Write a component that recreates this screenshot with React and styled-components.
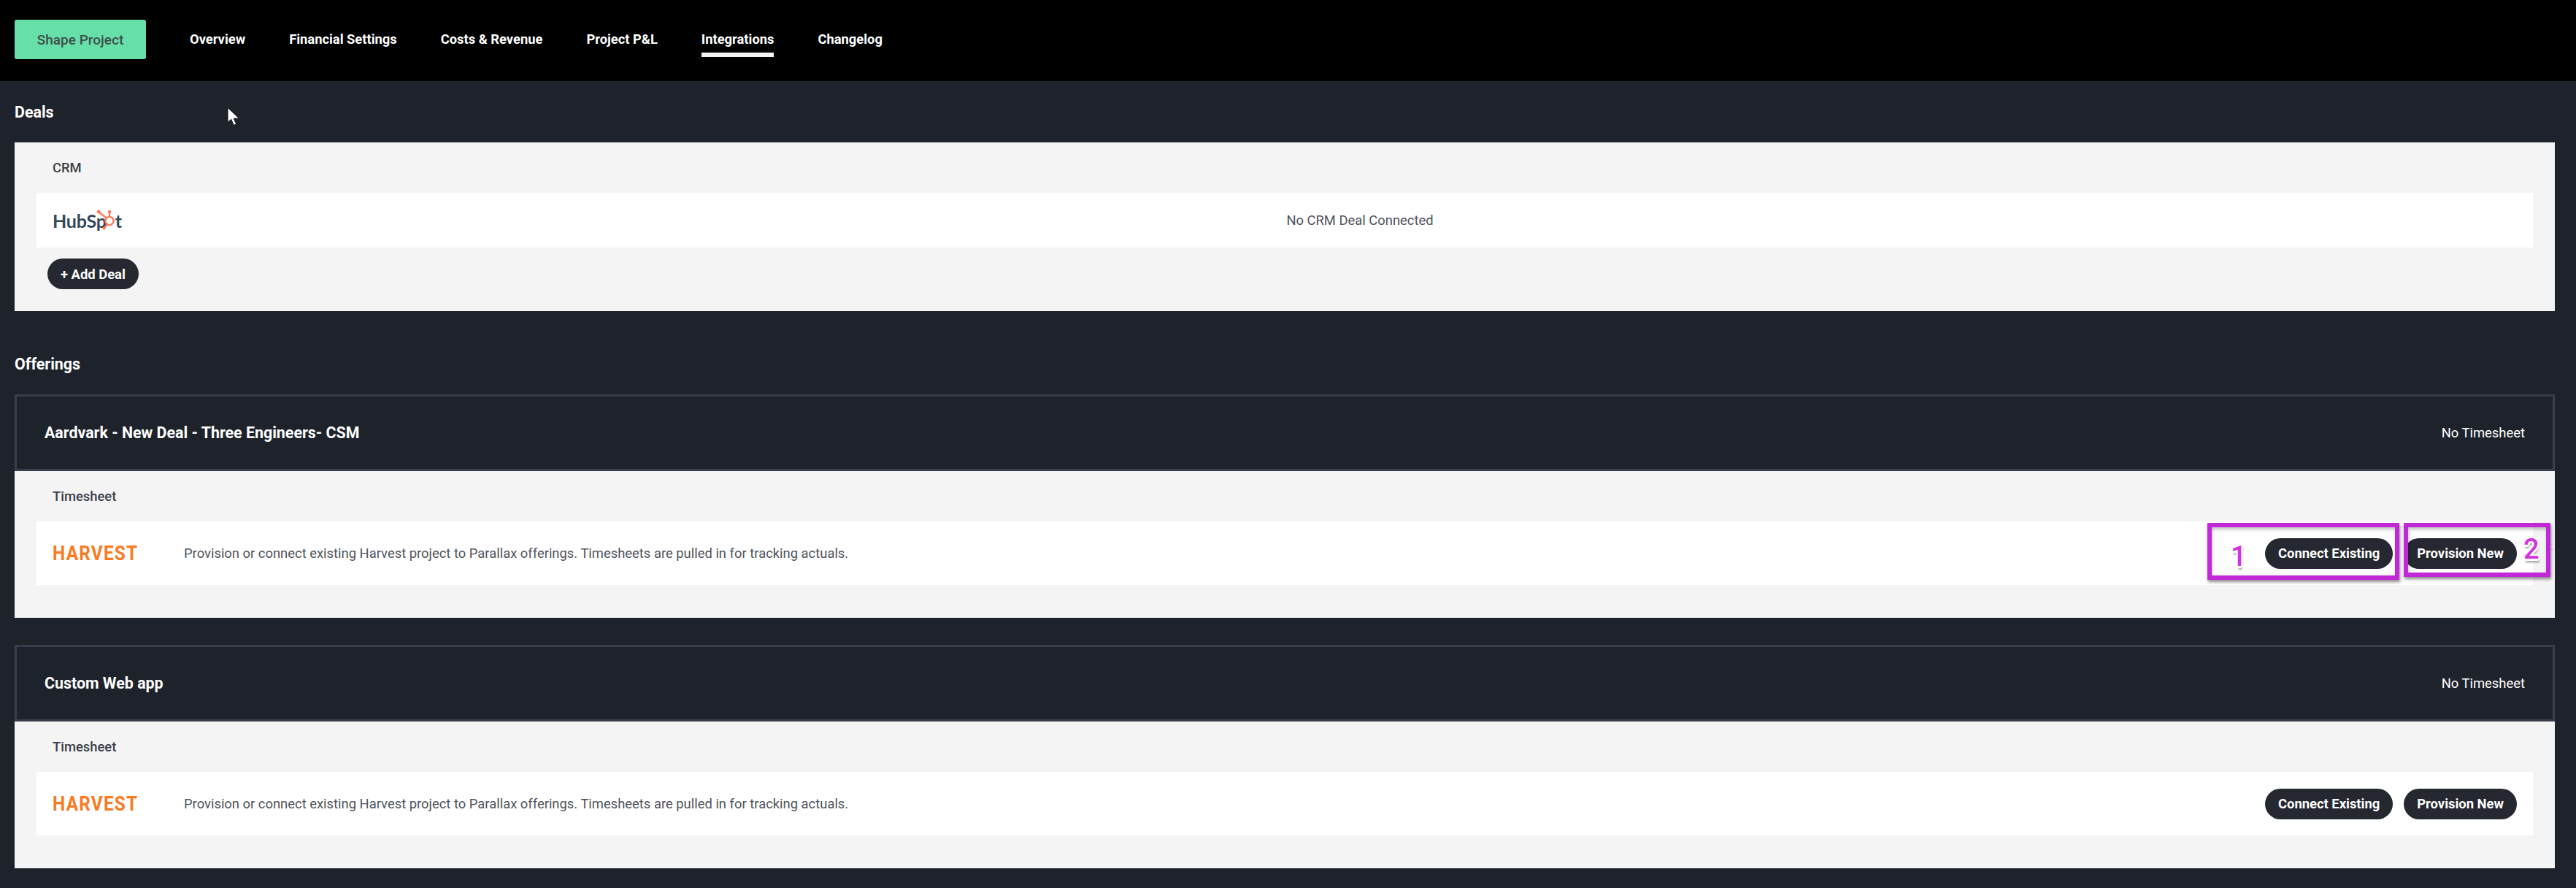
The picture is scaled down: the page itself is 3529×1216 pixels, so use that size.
import React from 'react';
import styled, { createGlobalStyle } from 'styled-components';

const GlobalStyle = createGlobalStyle`
  html, body {
    margin: 0;
    padding: 0;
    background: #1e222b;
    font-family: Roboto, "Liberation Sans", sans-serif;
  }
  * {
    box-sizing: border-box;
  }
`;

const Screen = styled.div`
  position: relative;
  width: 3529px;
  height: 1216px;
  overflow: hidden;
  background: #1e222b;
`;

const TopBar = styled.header`
  height: 111px;
  background: #000;
  display: flex;
  align-items: flex-start;
  padding: 27px 20px 0;
`;

const ShapeButton = styled.div`
  width: 180px;
  height: 54px;
  background: #66dfa9;
  border-radius: 3px;
  color: #3f4f49;
  font-size: 19px;
  font-weight: 500;
  display: flex;
  align-items: center;
  justify-content: center;
`;

const Nav = styled.nav`
  display: flex;
  gap: 60px;
  margin-left: 60px;
`;

const NavLink = styled.div`
  height: 51px;
  padding-top: 15px;
  font-size: 18.35px;
  line-height: 24px;
  font-weight: 700;
  color: #fff;
  border-bottom: 6px solid ${(p) => (p.$active ? '#f3f3f3' : 'transparent')};
`;

const Content = styled.main`
  padding: 0 29px 0 20px;
`;

const SectionTitle = styled.h2`
  margin: 0;
  height: 84px;
  display: flex;
  align-items: center;
  font-size: 21.4px;
  font-weight: 700;
  color: #fff;
`;

const Section = styled.section`
  margin-bottom: 30px;
`;

const Panel = styled.div`
  background: #f4f4f4;
  padding: 0 30px ${(p) => p.$bottom}px;
`;

const PanelLabel = styled.div`
  height: 69px;
  padding-left: 22px;
  display: flex;
  align-items: center;
  font-size: 18.4px;
  font-weight: 500;
  color: #3a3f4a;
`;

const Row = styled.div`
  position: relative;
  height: ${(p) => p.$height}px;
  background: #fff;
  padding: 0 22px;
  display: flex;
  align-items: center;
`;

const LogoCell = styled.div`
  width: 180px;
  flex: none;
`;

const HubSpotMark = styled.div`
  display: flex;
  align-items: center;
  height: 30px;
  color: #33475b;
  font-family: Lato, sans-serif;
  font-size: 25px;
  font-weight: 700;
  letter-spacing: -0.2px;
`;

const Sprocket = styled.svg`
  width: 22px;
  height: 28px;
  margin: -2px -3px 0 -7px;
  flex: none;
  overflow: visible;
`;

const HarvestMark = styled.div`
  color: #fa7a1f;
  font-size: 28px;
  line-height: 30px;
  font-weight: 700;
  letter-spacing: 1.4px;
  width: 116px;
  transform: scaleX(0.87);
  transform-origin: left center;
  white-space: nowrap;
`;

const NoDeal = styled.div`
  flex: 1;
  padding-left: 26px;
  text-align: center;
  font-size: 18.4px;
  color: #50545c;
`;

const Description = styled.div`
  flex: 1;
  font-size: 18.4px;
  color: #50545c;
`;

const PillRow = styled.div`
  display: flex;
  gap: 15px;
`;

const Pill = styled.button`
  height: 42px;
  padding: 0 18px;
  border: 0;
  border-radius: 21px;
  background: #252830;
  color: #fff;
  font-family: inherit;
  font-size: 18.4px;
  font-weight: 700;
  white-space: nowrap;
`;

const AddDealRow = styled.div`
  padding: 15px 0 0 15px;
`;

const OfferingHead = styled.div`
  height: 105px;
  border: 3px solid #3a3e4c;
  padding: 0 38px;
  display: flex;
  align-items: center;
  justify-content: space-between;
  color: #fff;
`;

const OfferingTitle = styled.div`
  font-size: 21.4px;
  font-weight: 700;
`;

const OfferingStatus = styled.div`
  font-size: 18.4px;
`;

const Offering = styled.div`
  margin-bottom: 37px;
`;

/* screenshot annotations drawn over the first offering */
const MarkBox = styled.div`
  position: absolute;
  left: ${(p) => p.$left}px;
  top: 2px;
  width: ${(p) => p.$width}px;
  height: ${(p) => p.$height}px;
  border: 6px solid #c228d8;
  box-shadow: 1px 3px 4px rgba(0, 0, 0, 0.45), inset 1px 3px 4px rgba(0, 0, 0, 0.25);
`;

const MarkTick = styled.div`
  position: absolute;
  left: 3445px;
  top: 38px;
  width: 2px;
  height: 1px;
  background: #d58ae0;
`;

const MarkNumber = styled.div`
  position: absolute;
  left: ${(p) => p.$left}px;
  top: ${(p) => p.$top}px;
  font-family: Roboto, sans-serif;
  font-size: 38px;
  line-height: 38px;
  font-weight: 500;
  color: #d530e4;
  text-shadow: 2.5px 0 0 #fff, -2.5px 0 0 #fff, 0 2.5px 0 #fff, 0 -2.5px 0 #fff,
    1.8px 1.8px 0 #fff, -1.8px 1.8px 0 #fff, 1.8px -1.8px 0 #fff, -1.8px -1.8px 0 #fff,
    1px 5px 3px rgba(0, 0, 0, 0.4);
`;

const Cursor = styled.svg`
  position: absolute;
  left: 310px;
  top: 146px;
  width: 21px;
  height: 27px;
`;

function HubSpotLogo() {
  return (
    <HubSpotMark>
      <span>HubSp</span>
      <Sprocket viewBox="0 0 22 28">
        <g fill="none" stroke="#ff7a59" strokeWidth="2.4">
          <circle cx="11" cy="15.5" r="5.6" />
          <path d="M11 9V3M7 11.5L-3 4M8 20.5L4 25" />
        </g>
        <g fill="#ff7a59">
          <circle cx="11" cy="3" r="2.2" />
          <circle cx="-4" cy="3" r="2.4" />
          <circle cx="3.5" cy="25.5" r="2" />
        </g>
      </Sprocket>
      <span>t</span>
    </HubSpotMark>
  );
}

const navItems = ['Overview', 'Financial Settings', 'Costs & Revenue', 'Project P&L', 'Integrations', 'Changelog'];
const offerings = [
  { name: 'Aardvark - New Deal - Three Engineers- CSM', marked: true },
  { name: 'Custom Web app', marked: false },
];

function OfferingCard({ name, marked }) {
  return (
    <Offering>
      <OfferingHead>
        <OfferingTitle>{name}</OfferingTitle>
        <OfferingStatus>No Timesheet</OfferingStatus>
      </OfferingHead>
      <Panel $bottom={45}>
        <PanelLabel>Timesheet</PanelLabel>
        <Row $height={87}>
          <LogoCell>
            <HarvestMark>HARVEST</HarvestMark>
          </LogoCell>
          <Description>
            Provision or connect existing Harvest project to Parallax offerings. Timesheets are pulled in for tracking actuals.
          </Description>
          <PillRow>
            <Pill>Connect Existing</Pill>
            <Pill>Provision New</Pill>
          </PillRow>
          {marked && (
            <>
              <MarkBox $left={2974} $width={263} $height={78} />
              <MarkNumber $left={3006} $top={29}>1</MarkNumber>
              <MarkBox $left={3243} $width={201} $height={74} />
              <MarkNumber $left={3407} $top={19}>2</MarkNumber>
              <MarkTick />
            </>
          )}
        </Row>
      </Panel>
    </Offering>
  );
}

export default function App() {
  return (
    <Screen>
      <GlobalStyle />
      <TopBar>
        <ShapeButton>Shape Project</ShapeButton>
        <Nav>
          {navItems.map((item) => (
            <NavLink key={item} $active={item === 'Integrations'}>{item}</NavLink>
          ))}
        </Nav>
      </TopBar>
      <Content>
        <Section>
          <SectionTitle>Deals</SectionTitle>
          <Panel $bottom={30}>
            <PanelLabel>CRM</PanelLabel>
            <Row $height={75}>
              <LogoCell>
                <HubSpotLogo />
              </LogoCell>
              <NoDeal>No CRM Deal Connected</NoDeal>
            </Row>
            <AddDealRow>
              <Pill>+ Add Deal</Pill>
            </AddDealRow>
          </Panel>
        </Section>
        <section>
          <SectionTitle>Offerings</SectionTitle>
          {offerings.map((o) => (
            <OfferingCard key={o.name} name={o.name} marked={o.marked} />
          ))}
        </section>
      </Content>
      <Cursor viewBox="0 0 21 27">
        <path d="M2 1.5V21.5L6.7 17.3L10.3 25.5L13.7 24L10.1 16.2H17.5Z" fill="#fff" stroke="#15171c" strokeWidth="1" />
      </Cursor>
    </Screen>
  );
}
